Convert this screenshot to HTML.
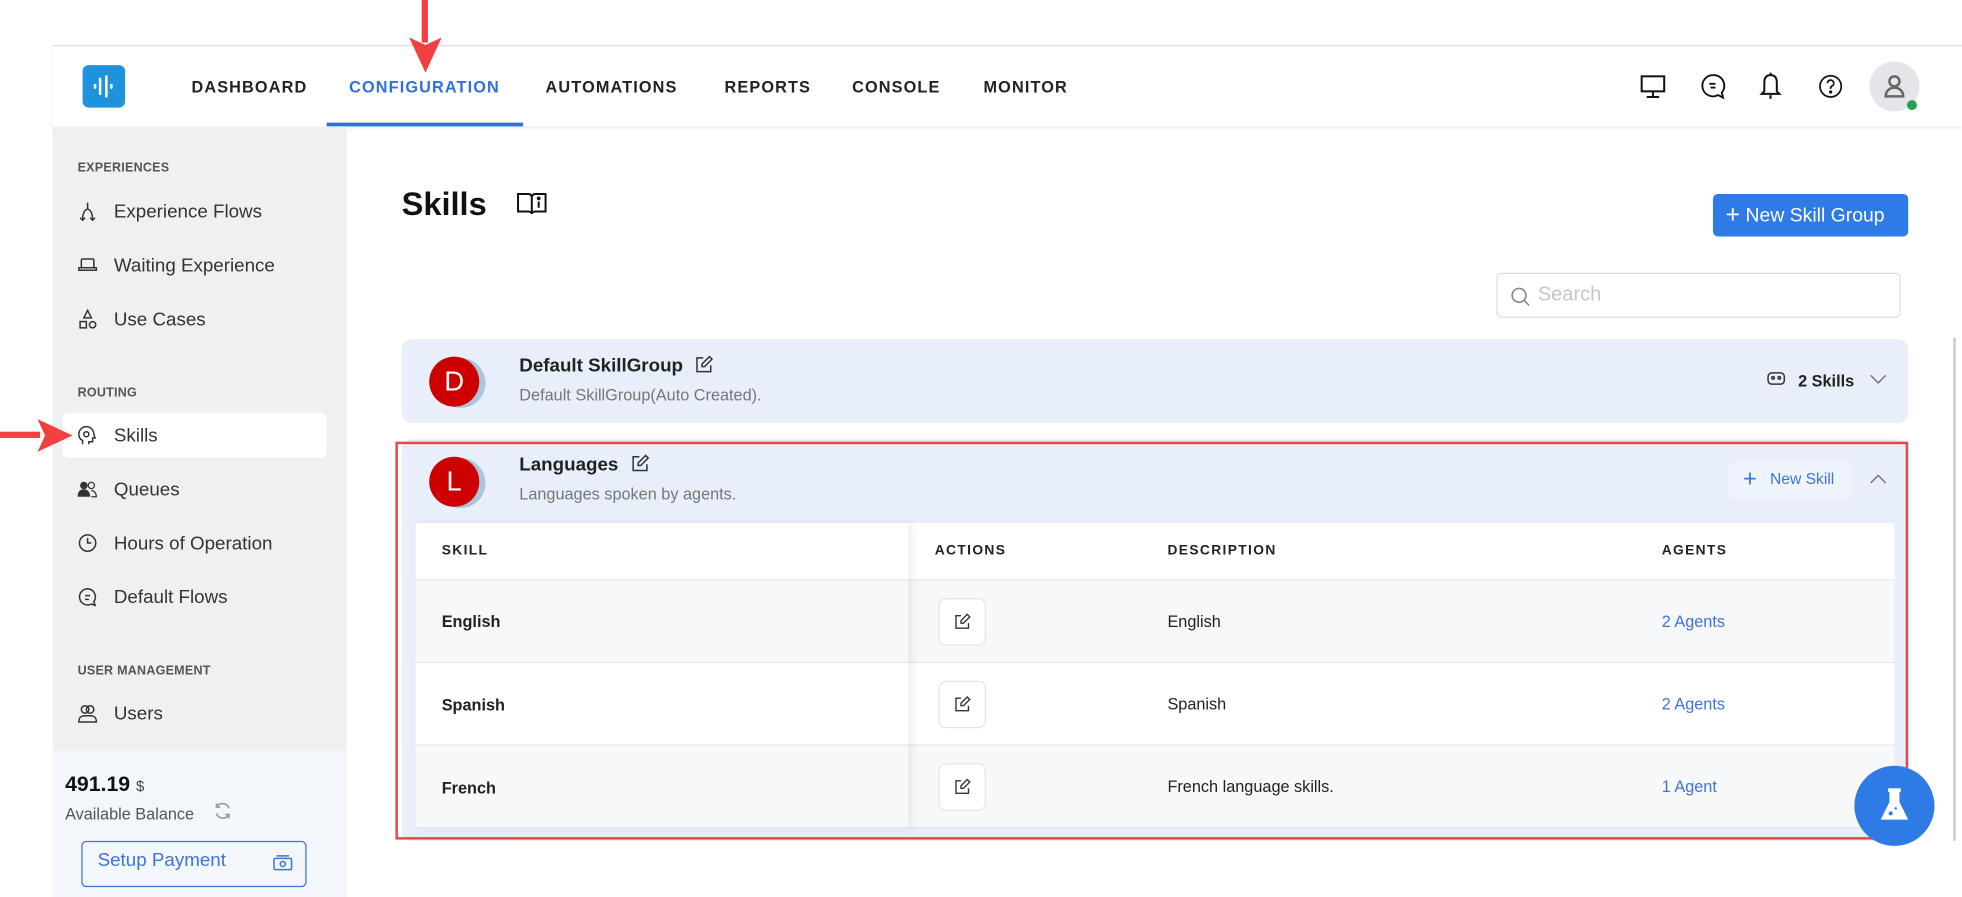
<!DOCTYPE html>
<html><head><meta charset="utf-8">
<style>
*{box-sizing:border-box;margin:0;padding:0}
html,body{width:1962px;height:897px;overflow:hidden;background:#fff;font-family:"Liberation Sans",Arial,sans-serif;color:#222}
#w{position:absolute;left:0;top:0;width:1568px;height:717px;transform:scale(1.25128);transform-origin:0 0}
.a{position:absolute}
.nav{position:absolute;top:62px;font-size:13px;font-weight:700;letter-spacing:.9px;color:#222}
.sec{position:absolute;left:62px;font-size:10px;font-weight:700;color:#555;letter-spacing:.2px}
.it{position:absolute;left:91px;font-size:15px;color:#333}
.ic{position:absolute;left:62px;width:16px;height:16px}
.th{position:absolute;top:434px;font-size:11px;font-weight:700;letter-spacing:1.1px;color:#222}
.td{position:absolute;font-size:13px;color:#222}
.ag{position:absolute;left:1328px;font-size:13px;color:#3d74d8}
.eb{position:absolute;left:750px;width:38px;height:38px;border:1px solid #e2e4e8;border-radius:6px;background:#fff}
</style></head><body>
<div id="w">
<div class="a" style="left:42px;top:36px;width:1526px;height:1px;background:#ddd"></div>
<div class="a" style="left:42px;top:37px;width:1526px;height:64px;background:#fff;box-shadow:0 2px 3px rgba(0,0,0,.08)"></div>
<div class="a" style="left:66px;top:52px;width:34px;height:34px;background:#1f92dc;border-radius:5px"></div>
<svg class="a" style="left:66px;top:52px" width="34" height="34"><g stroke="#fff" stroke-width="2" stroke-linecap="round"><line x1="14" y1="11" x2="14" y2="23"/><line x1="19" y1="9" x2="19" y2="25"/><line x1="10" y1="16" x2="10" y2="18"/><line x1="23" y1="16" x2="23" y2="18"/></g></svg>
<div class="nav" style="left:153px">DASHBOARD</div>
<div class="nav" style="left:279px;color:#2f6fde">CONFIGURATION</div>
<div class="nav" style="left:436px">AUTOMATIONS</div>
<div class="nav" style="left:579px">REPORTS</div>
<div class="nav" style="left:681px">CONSOLE</div>
<div class="nav" style="left:786px">MONITOR</div>
<div class="a" style="left:261px;top:98px;width:157px;height:3px;background:#2f6fde"></div>
<svg class="a" style="left:1310px;top:58px" width="22" height="22" fill="none" stroke="#111" stroke-width="1.6"><rect x="2" y="3" width="18" height="12"/><line x1="11" y1="15" x2="11" y2="19"/><line x1="6" y1="19.5" x2="16" y2="19.5"/></svg>
<svg class="a" style="left:1358px;top:58px" width="22" height="22" fill="none" stroke="#111" stroke-width="1.5"><path d="M11 2a8.5 8.5 0 1 0 4 16l4 2-1-4A8.5 8.5 0 0 0 11 2z"/><line x1="8" y1="9" x2="13" y2="9"/><line x1="9" y1="12" x2="13" y2="12"/></svg>
<svg class="a" style="left:1405px;top:57px" width="20" height="24" fill="none" stroke="#111" stroke-width="1.6"><path d="M10 3c-4 0-5 3-5 6v7l-2 2h14l-2-2V9c0-3-1-6-5-6z"/><line x1="10" y1="1" x2="10" y2="3"/><line x1="10" y1="19" x2="10" y2="22"/></svg>
<svg class="a" style="left:1453px;top:59px" width="20" height="20" fill="none" stroke="#111" stroke-width="1.4"><circle cx="10" cy="10" r="8.5"/><path d="M7.5 7.5a2.5 2.5 0 1 1 3.5 2.3c-1 .5-1 1.2-1 2.2"/><circle cx="10" cy="14.5" r=".6" fill="#111"/></svg>
<div class="a" style="left:1494px;top:49px;width:40px;height:40px;border-radius:50%;background:#e3e5e9"></div>
<svg class="a" style="left:1504px;top:58px" width="20" height="22" fill="none" stroke="#666" stroke-width="2"><circle cx="10" cy="7" r="4"/><path d="M3 19c0-4 3-7 7-7s7 3 7 7z"/></svg>
<div class="a" style="left:1524px;top:80px;width:8px;height:8px;border-radius:50%;background:#22a34a"></div>
<div class="a" style="left:42px;top:101px;width:235px;height:499px;background:#eff0f2"></div>
<div class="a" style="left:42px;top:600px;width:235px;height:117px;background:#f3f6fa"></div>
<div class="sec" style="top:129px">EXPERIENCES</div>
<div class="it" style="top:161px">Experience Flows</div>
<div class="it" style="top:204px">Waiting Experience</div>
<div class="it" style="top:247px">Use Cases</div>
<div class="sec" style="top:309px">ROUTING</div>
<div class="a" style="left:50px;top:330px;width:211px;height:36px;background:#fff;border-radius:5px"></div>
<div class="it" style="top:340px">Skills</div>
<div class="it" style="top:383px">Queues</div>
<div class="it" style="top:426px">Hours of Operation</div>
<div class="it" style="top:469px">Default Flows</div>
<div class="sec" style="top:531px">USER MANAGEMENT</div>
<div class="it" style="top:562px">Users</div>
<svg class="ic" style="top:161px" fill="none" stroke="#333" stroke-width="1.2"><path d="M8 1v5M4 15c0-5 1-8 4-9 3 1 4 4 4 9M2 13l2 2 2-2M10 13l2 2 2-2"/></svg>
<svg class="ic" style="top:204px" fill="none" stroke="#333" stroke-width="1.2"><rect x="3" y="3" width="10" height="7" rx="1"/><path d="M1 10h14v2H1z"/></svg>
<svg class="ic" style="top:247px" fill="none" stroke="#333" stroke-width="1.2"><path d="M8 1L5 7h6z"/><rect x="2" y="10" width="5" height="5"/><circle cx="12" cy="12.5" r="2.5"/></svg>
<svg class="ic" style="top:340px" fill="none" stroke="#333" stroke-width="1.2"><path d="M4 15v-3c-2-1-3-3-3-5a6 6 0 0 1 12 0l1 3h-2v3h-3v2"/><circle cx="7" cy="7" r="2"/></svg>
<svg class="ic" style="top:383px" fill="#333"><circle cx="5" cy="5" r="3"/><path d="M0 14c0-4 2-6 5-6s5 2 5 6z"/><circle cx="11" cy="5" r="2.5" fill="none" stroke="#333"/><path d="M11 9c2 0 4 2 4 5h-4" fill="none" stroke="#333"/></svg>
<svg class="ic" style="top:426px" fill="none" stroke="#333" stroke-width="1.2"><circle cx="8" cy="8" r="6.5"/><path d="M8 4v4h3"/></svg>
<svg class="ic" style="top:469px" fill="none" stroke="#333" stroke-width="1.2"><path d="M8 1.5a6.5 6.5 0 1 0 3 12.3l3 1-1-3A6.5 6.5 0 0 0 8 1.5z"/><path d="M6 7h4M6 10h3"/></svg>
<svg class="ic" style="top:562px" fill="none" stroke="#333" stroke-width="1.2"><circle cx="6" cy="5" r="3"/><circle cx="10" cy="5" r="3"/><path d="M1 15c0-4 2-5 5-5h4c3 0 5 1 5 5z"/></svg>
<div class="a" style="left:52px;top:617px;font-size:17px;font-weight:700;color:#111">491.19 <span style="font-size:12px;font-weight:400;color:#444">$</span></div>
<div class="a" style="left:52px;top:643px;font-size:13px;color:#555">Available Balance</div>
<svg class="a" style="left:170px;top:640px" width="16" height="16" fill="none" stroke="#999" stroke-width="1.3"><path d="M13 6a5.5 5.5 0 0 0-10-1M3 10a5.5 5.5 0 0 0 10 1M3 2v3h3M13 14v-3h-3"/></svg>
<div class="a" style="left:65px;top:672px;width:180px;height:37px;border:1px solid #3d74d8;border-radius:4px;background:#f3f6fa"></div>
<div class="a" style="left:78px;top:679px;font-size:15px;color:#3d74d8">Setup Payment</div>
<svg class="a" style="left:218px;top:682px" width="16" height="16" fill="none" stroke="#3d74d8" stroke-width="1.2"><rect x="1" y="4" width="14" height="9" rx="1"/><circle cx="8" cy="8.5" r="2"/><line x1="3" y1="2" x2="13" y2="2"/></svg>
<div class="a" style="left:337px;top:0;width:5px;height:34px;background:#f0403f"></div>
<svg class="a" style="left:324px;top:26px" width="32" height="34"><path d="M3 4l13 6 13-6-13 28z" fill="#f0403f"/></svg>
<div class="a" style="left:0;top:345px;width:32px;height:5px;background:#f0403f"></div>
<svg class="a" style="left:26px;top:332px" width="34" height="32"><path d="M4 3l6 13-6 13 28-13z" fill="#f0403f"/></svg>
<div class="a" style="left:321px;top:148px;font-size:26px;font-weight:700;color:#111">Skills</div>
<svg class="a" style="left:412px;top:152px" width="26" height="22" fill="none" stroke="#111" stroke-width="1.6"><path d="M2 3h8c2 0 3 1 3 3v13c0-1-1-2-3-2H2zM24 3h-8c-2 0-3 1-3 3v13c0-1 1-2 3-2h8z"/><line x1="18.5" y1="9" x2="18.5" y2="14"/><circle cx="18.5" cy="6.5" r=".7" fill="#111"/></svg>
<div class="a" style="left:1369px;top:155px;width:156px;height:34px;background:#2f7be5;border-radius:4px"></div>
<div class="a" style="left:1379px;top:163px;font-size:15.5px;color:#fff"><span style="font-size:20px;line-height:16px;position:relative;top:1px">+</span> New Skill Group</div>
<div class="a" style="left:1196px;top:218px;width:323px;height:36px;border:1px solid #ddd;border-radius:4px"></div>
<svg class="a" style="left:1207px;top:229px" width="16" height="16" fill="none" stroke="#888" stroke-width="1.3"><circle cx="7" cy="7" r="5.5"/><line x1="11" y1="11" x2="15" y2="15"/></svg>
<div class="a" style="left:1229px;top:227px;font-size:16px;color:#c4c6ca">Search</div>
<div class="a" style="left:321px;top:271px;width:1204px;height:67px;background:#e8eefa;border-radius:8px"></div>
<div class="a" style="left:348px;top:286px;width:40px;height:40px;border-radius:50%;background:#a9c6dc"></div>
<div class="a" style="left:343px;top:285px;width:40px;height:40px;border-radius:50%;background:#cc0000;color:#fff;font-size:22px;text-align:center;line-height:40px">D</div>
<div class="a" style="left:415px;top:284px;font-size:15px;font-weight:700;color:#222">Default SkillGroup</div>
<div class="a" style="left:415px;top:308px;font-size:13px;color:#777">Default SkillGroup(Auto Created).</div>
<svg class="a" style="left:555px;top:284px" width="15" height="15" fill="none" stroke="#333" stroke-width="1.2"><path d="M7 2H2v11h11V8"/><path d="M12 1l2 2-6 6H6V7z"/></svg>
<svg class="a" style="left:1412px;top:297px" width="15" height="13" fill="none" stroke="#333" stroke-width="1.2"><rect x="1" y="1" width="13" height="9" rx="3"/><circle cx="5" cy="5" r="1"/><circle cx="10" cy="5" r="1"/></svg>
<div class="a" style="left:1437px;top:297px;font-size:13px;font-weight:700;color:#222">2 Skills</div>
<svg class="a" style="left:1494px;top:298px" width="14" height="10" fill="none" stroke="#777" stroke-width="1.2"><path d="M1 2l6 6 6-6"/></svg>
<div class="a" style="left:321px;top:351px;width:1204px;height:321px;background:#e8eefa;border-radius:8px"></div>
<div class="a" style="left:316px;top:353px;width:1209px;height:318px;border:2px solid #f0444a"></div>
<div class="a" style="left:348px;top:366px;width:40px;height:40px;border-radius:50%;background:#a9c6dc"></div>
<div class="a" style="left:343px;top:365px;width:40px;height:40px;border-radius:50%;background:#cc0000;color:#fff;font-size:22px;text-align:center;line-height:40px">L</div>
<div class="a" style="left:415px;top:363px;font-size:15px;font-weight:700;color:#222">Languages</div>
<div class="a" style="left:415px;top:387px;font-size:13px;color:#777">Languages spoken by agents.</div>
<svg class="a" style="left:504px;top:363px" width="15" height="15" fill="none" stroke="#333" stroke-width="1.2"><path d="M7 2H2v11h11V8"/><path d="M12 1l2 2-6 6H6V7z"/></svg>
<div class="a" style="left:1382px;top:369px;width:99px;height:30px;background:#eff4fc;border-radius:4px"></div>
<div class="a" style="left:1393px;top:375px;font-size:12.5px;color:#3d74d8"><span style="font-size:19px;font-weight:300;line-height:13px;position:relative;top:2px">+</span>&nbsp;&nbsp;&nbsp;New Skill</div>
<svg class="a" style="left:1494px;top:378px" width="14" height="10" fill="none" stroke="#777" stroke-width="1.2"><path d="M1 8l6-6 6 6"/></svg>
<div class="a" style="left:332px;top:418px;width:1182px;height:46px;background:#fff;border-bottom:1px solid #e2e4e8"></div>
<div class="a" style="left:332px;top:464px;width:1182px;height:66px;background:#f7f8fa;border-bottom:1px solid #e2e4e8"></div>
<div class="a" style="left:332px;top:530px;width:1182px;height:66px;background:#fff;border-bottom:1px solid #e2e4e8"></div>
<div class="a" style="left:332px;top:596px;width:1182px;height:66px;background:#f7f8fa;border-bottom:1px solid #e2e4e8"></div>
<div class="a" style="left:332px;top:418px;width:394px;height:244px;box-shadow:3px 0 6px rgba(0,0,0,.07)"></div>
<div class="th" style="left:353px">SKILL</div>
<div class="th" style="left:747px">ACTIONS</div>
<div class="th" style="left:933px">DESCRIPTION</div>
<div class="th" style="left:1328px">AGENTS</div>
<div class="td" style="left:353px;top:489px;font-weight:700">English</div>
<div class="td" style="left:353px;top:556px;font-weight:700">Spanish</div>
<div class="td" style="left:353px;top:622px;font-weight:700">French</div>
<div class="eb" style="top:478px"></div><div class="eb" style="top:544px"></div><div class="eb" style="top:610px"></div>
<svg class="a" style="left:762px;top:490px" width="14" height="14" fill="none" stroke="#333" stroke-width="1.1"><path d="M6 2H2v10h10V8"/><path d="M11 1l2 2-5 5H6V6z"/></svg>
<svg class="a" style="left:762px;top:556px" width="14" height="14" fill="none" stroke="#333" stroke-width="1.1"><path d="M6 2H2v10h10V8"/><path d="M11 1l2 2-5 5H6V6z"/></svg>
<svg class="a" style="left:762px;top:622px" width="14" height="14" fill="none" stroke="#333" stroke-width="1.1"><path d="M6 2H2v10h10V8"/><path d="M11 1l2 2-5 5H6V6z"/></svg>
<div class="td" style="left:933px;top:489px">English</div>
<div class="td" style="left:933px;top:555px">Spanish</div>
<div class="td" style="left:933px;top:621px">French language skills.</div>
<div class="ag" style="top:489px">2 Agents</div>
<div class="ag" style="top:555px">2 Agents</div>
<div class="ag" style="top:621px">1 Agent</div>
<div class="a" style="left:1561px;top:270px;width:2px;height:402px;background:#ccc"></div>
<div class="a" style="left:1482px;top:612px;width:64px;height:64px;border-radius:50%;background:#2f7be5"></div>
<svg class="a" style="left:1500px;top:628px" width="28" height="32" fill="#fff"><rect x="9" y="2" width="10" height="3"/><path d="M10 5h8v8l7 14H3l7-14z"/><circle cx="11" cy="22" r="1.6" fill="#2f7be5"/><circle cx="15" cy="18" r="1" fill="#2f7be5"/></svg>
</div>
</body></html>
